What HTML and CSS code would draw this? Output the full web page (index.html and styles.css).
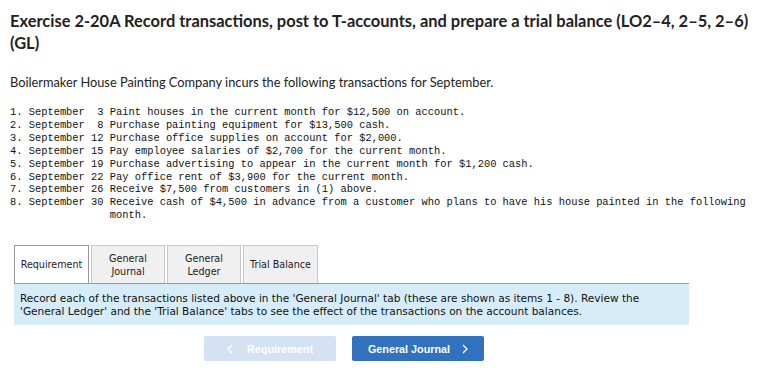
FILE: index.html
```html
<!DOCTYPE html>
<html>
<head>
  <meta charset="UTF-8">
  <title>Exercise 2-20A</title>
  <link rel="stylesheet" href="styles.css">
</head>
<body>

  <h2 class="title">Exercise 2-20A Record transactions, post to T-accounts, and prepare a trial balance (LO2–4, 2–5, 2–6) (GL)</h2>

  <p class="intro">Boilermaker House Painting Company incurs the following transactions for September.</p>

  <pre class="list">1. September  3 Paint houses in the current month for $12,500 on account.
2. September  8 Purchase painting equipment for $13,500 cash.
3. September 12 Purchase office supplies on account for $2,000.
4. September 15 Pay employee salaries of $2,700 for the current month.
5. September 19 Purchase advertising to appear in the current month for $1,200 cash.
6. September 22 Pay office rent of $3,900 for the current month.
7. September 26 Receive $7,500 from customers in (1) above.
8. September 30 Receive cash of $4,500 in advance from a customer who plans to have his house painted in the following
                month.</pre>

  <div class="tabs">
    <div class="tab active">Requirement</div>
    <div class="tab">General<br>Journal</div>
    <div class="tab">General<br>Ledger</div>
    <div class="tab">Trial Balance</div>
  </div>

  <div class="panel">
    Record each of the transactions listed above in the 'General Journal' tab (these are shown as items 1 - 8). Review the<br>
    'General Ledger' and the 'Trial Balance' tabs to see the effect of the transactions on the account balances.
  </div>

  <div class="nav">
    <button class="nav-btn disabled">
      <svg class="chev" width="6" height="10" viewBox="0 0 6 10"><path d="M5 1 L1 5 L5 9" fill="none" stroke="#fff" stroke-width="1.3"/></svg>
      Requirement
    </button>
    <button class="nav-btn primary">
      General Journal
      <svg class="chev" width="6" height="10" viewBox="0 0 6 10"><path d="M1 1 L5 5 L1 9" fill="none" stroke="#fff" stroke-width="1.3"/></svg>
    </button>
  </div>

</body>
</html>
```

FILE: styles.css
```css
body {
  margin: 0;
  padding: 10px;
  font-family: Lato, "Open Sans", sans-serif;
  color: #222;
}
.title {
  margin: 0;
  font-size: 16.45px;
  line-height: 22px;
  font-weight: 700;
  width: 760px;
}
.intro {
  margin: 20px 0 0;
  font-size: 12.8px;
  line-height: 16px;
}
.list {
  margin: 16px 0 0;
  font-family: "Liberation Mono", monospace;
  font-size: 10.4px;
  line-height: 12.9px;
  color: #111;
}
.tabs {
  display: flex;
  gap: 2px;
  margin: 23px 0 0 4px;
  align-items: flex-end;
}
.tab {
  box-sizing: border-box;
  height: 38px;
  width: 74px;
  display: flex;
  align-items: center;
  justify-content: center;
  text-align: center;
  font-family: "DejaVu Sans", Verdana, sans-serif;
  font-size: 9.6px;
  line-height: 13px;
  background: #f0f0f0;
  border: 1px solid #c8c8c8;
  border-bottom: none;
  color: #222;
}
.tab.active {
  width: 75px;
  background: #fff;
  border-color: #999;
}
.tab:last-child {
  width: 75px;
}
.panel {
  margin-left: 4px;
  width: 675px;
  box-sizing: border-box;
  padding: 8px 6px 7px;
  background: #d6edf9;
  border-top: 1px solid #999;
  font-family: "DejaVu Sans", Verdana, sans-serif;
  font-size: 10.55px;
  line-height: 13px;
  color: #111;
}
.nav {
  display: flex;
  gap: 16px;
  margin: 11px 0 0 194px;
}
.nav-btn {
  width: 132px;
  height: 25px;
  border: none;
  border-radius: 2px;
  display: flex;
  align-items: center;
  justify-content: center;
  gap: 12px;
  font-family: "Liberation Sans", Arial, sans-serif;
  font-size: 10.8px;
  font-weight: 700;
  color: #fff;
}
.nav-btn.disabled {
  background: #d5e2f3;
  gap: 14px;
}
.nav-btn.primary {
  background: #3171be;
}
```
